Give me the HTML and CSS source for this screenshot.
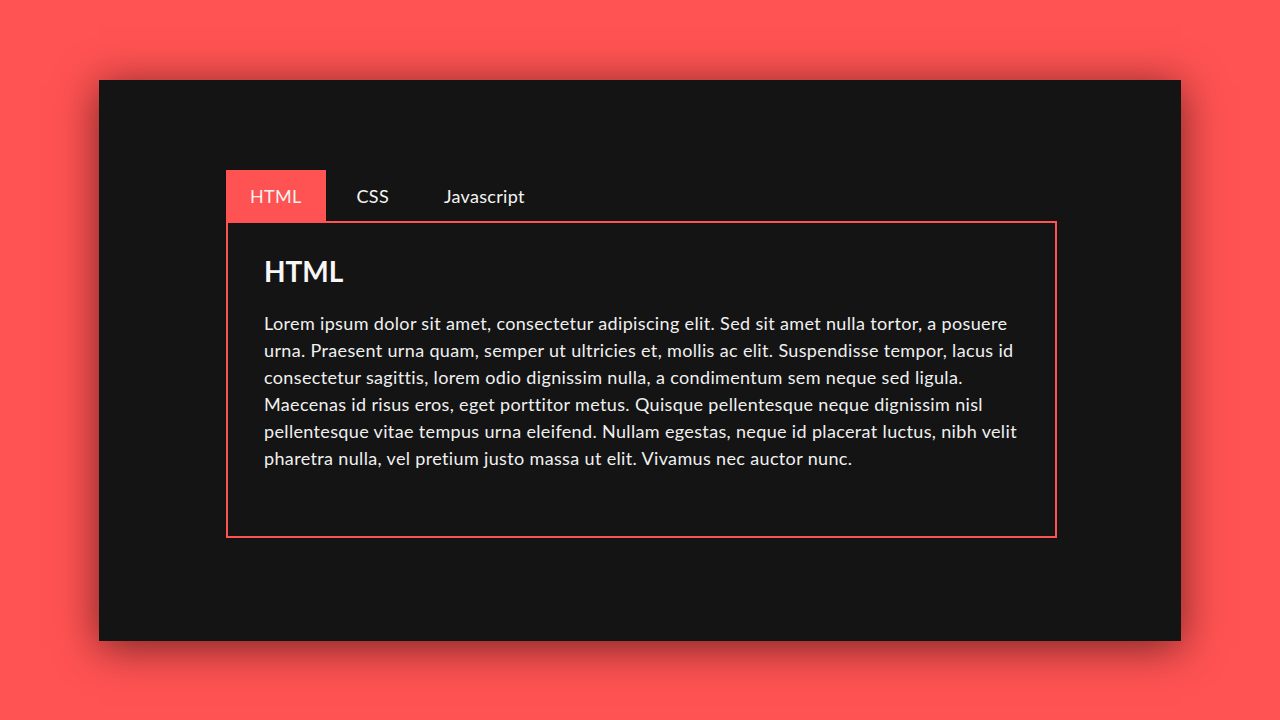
FILE: index.html
```html
<!DOCTYPE html>
<html lang="en">
<head>
<meta charset="utf-8">
<title>Tabs</title>
<link rel="stylesheet" href="styles.css">
</head>
<body>
<div class="panel">
  <div class="tabs">
    <div class="tab-bar">
      <div class="tab active">HTML</div>
      <div class="tab">CSS</div>
      <div class="tab">Javascript</div>
    </div>
    <div class="tab-content">
      <h2 class="title">HTML</h2>
      <p class="text">Lorem ipsum dolor sit amet, consectetur adipiscing elit. Sed sit amet nulla tortor, a posuere urna. Praesent urna quam, semper ut ultricies et, mollis ac elit. Suspendisse tempor, lacus id consectetur sagittis, lorem odio dignissim nulla, a condimentum sem neque sed ligula. Maecenas id risus eros, eget porttitor metus. Quisque pellentesque neque dignissim nisl pellentesque vitae tempus urna eleifend. Nullam egestas, neque id placerat luctus, nibh velit pharetra nulla, vel pretium justo massa ut elit. Vivamus nec auctor nunc.</p>
    </div>
  </div>
</div>
</body>
</html>
```
FILE: styles.css
```css
html, body {
  margin: 0;
  padding: 0;
}
body {
  background: #ff5252;
  font-family: Lato, "Open Sans", sans-serif;
  font-variant-ligatures: none;
  width: 1280px;
  height: 720px;
  overflow: hidden;
  padding: 80px 99px 0 99px;
  box-sizing: border-box;
}
.panel {
  width: 1082px;
  height: 561px;
  background: #141414;
  box-shadow: 0 6px 40px rgba(0, 0, 0, 0.55);
  box-sizing: border-box;
  padding: 90px 124px 0 127px;
}
.tab-bar {
  display: flex;
  gap: 7px;
}
.tab {
  padding: 0 24px;
  height: 51px;
  line-height: 52px;
  font-size: 18px;
  letter-spacing: 0.3px;
  color: #f4f4f4;
}
.tab.active {
  background: #ff5252;
}
.tab-content {
  border: 2px solid #ff5252;
  height: 317px;
  box-sizing: border-box;
  padding: 31px 36px 0 36px;
}
.title {
  margin: 0 0 22px 0;
  font-size: 28px;
  font-weight: 700;
  color: #f7f7f7;
  line-height: 34px;
}
.text {
  margin: 0;
  font-size: 18px;
  letter-spacing: 0.35px;
  line-height: 27px;
  color: #f0f0f0;
}
```
